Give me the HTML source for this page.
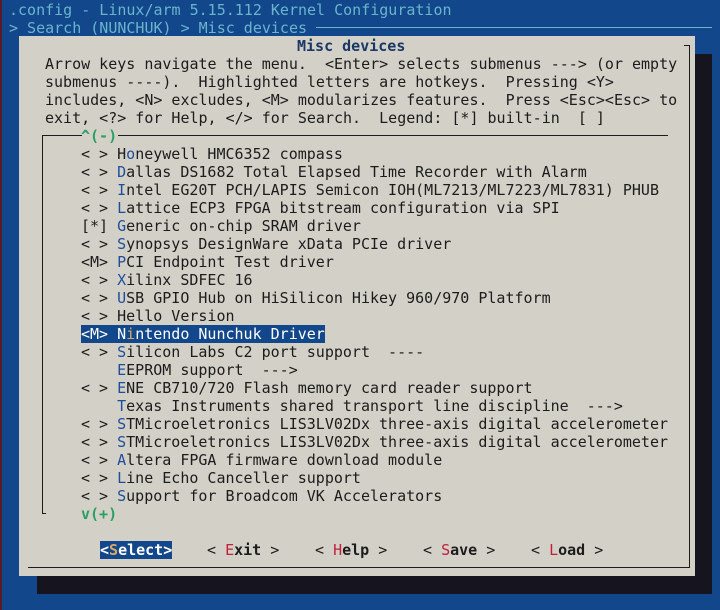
<!DOCTYPE html>
<html><head><meta charset="utf-8"><style>
html,body{margin:0;padding:0}
body{width:720px;height:610px;background:#12488b;position:relative;overflow:hidden;font-family:"DejaVu Sans Mono","Liberation Mono",monospace;font-size:15px}
.r{position:absolute;white-space:pre;line-height:18px;height:18px;color:#1c1c1c;margin-top:1px}
.c{color:#6ab4cc}
.b{color:#1e4e9a}
.g{color:#2aa063;font-weight:bold}
.k{color:#c0203a}
</style></head><body>
<div style="position:absolute;left:0;top:0;width:2px;height:610px;background:#5a1a2a"></div>
<div class="r c" style="left:9px;top:0">.config - Linux/arm 5.15.112 Kernel Configuration</div>
<div class="r c" style="left:9px;top:18px">&gt; Search (NUNCHUK) &gt; Misc devices</div>
<div style="position:absolute;left:316px;top:27px;width:396px;height:1px;background:#6ab4cc"></div>
<div style="position:absolute;left:37px;top:54px;width:675px;height:540px;background:#16141e"></div>
<div style="position:absolute;left:19px;top:36px;width:676px;height:540px;background:#d3d0c8"></div>
<div style="position:absolute;left:689px;top:45px;width:1px;height:522px;background:#1c1c1c"></div>
<div style="position:absolute;left:28px;top:567px;width:662px;height:1px;background:#1c1c1c"></div>
<div style="position:absolute;left:684px;top:45px;width:6px;height:1px;background:#1c1c1c"></div>
<div class="r" style="left:297px;top:36px;color:#1a3766;font-weight:bold">Misc devices</div>
<div class="r" style="left:45px;top:54px">Arrow keys navigate the menu.  &lt;Enter&gt; selects submenus ---&gt; (or empty</div>
<div class="r" style="left:45px;top:72px">submenus ----).  Highlighted letters are hotkeys.  Pressing &lt;Y&gt;</div>
<div class="r" style="left:45px;top:90px">includes, &lt;N&gt; excludes, &lt;M&gt; modularizes features.  Press &lt;Esc&gt;&lt;Esc&gt; to</div>
<div class="r" style="left:45px;top:108px">exit, &lt;?&gt; for Help, &lt;/&gt; for Search.  Legend: [*] built-in  [ ]</div>
<div style="position:absolute;left:42px;top:135px;width:40px;height:1px;background:#1c1c1c"></div>
<div style="position:absolute;left:118px;top:135px;width:550px;height:1px;background:#1c1c1c"></div>
<div style="position:absolute;left:42px;top:135px;width:1px;height:379px;background:#1c1c1c"></div>
<div style="position:absolute;left:42px;top:513px;width:4px;height:1px;background:#1c1c1c"></div>
<div class="r g" style="left:81px;top:126px">^(-)</div>
<div class="r" style="left:81px;top:144px">&lt; &gt; H<span class="b">o</span>neywell HMC6352 compass</div>
<div class="r" style="left:81px;top:162px">&lt; &gt; <span class="b">D</span>allas DS1682 Total Elapsed Time Recorder with Alarm</div>
<div class="r" style="left:81px;top:180px">&lt; &gt; <span class="b">I</span>ntel EG20T PCH/LAPIS Semicon IOH(ML7213/ML7223/ML7831) PHUB</div>
<div class="r" style="left:81px;top:198px">&lt; &gt; <span class="b">L</span>attice ECP3 FPGA bitstream configuration via SPI</div>
<div class="r" style="left:81px;top:216px">[*] <span class="b">G</span>eneric on-chip SRAM driver</div>
<div class="r" style="left:81px;top:234px">&lt; &gt; <span class="b">S</span>ynopsys DesignWare xData PCIe driver</div>
<div class="r" style="left:81px;top:252px">&lt;M&gt; <span class="b">P</span>CI Endpoint Test driver</div>
<div class="r" style="left:81px;top:270px">&lt; &gt; <span class="b">X</span>ilinx SDFEC 16</div>
<div class="r" style="left:81px;top:288px">&lt; &gt; <span class="b">U</span>SB GPIO Hub on HiSilicon Hikey 960/970 Platform</div>
<div class="r" style="left:81px;top:306px">&lt; &gt; Hello Version</div>
<div class="r" style="left:81px;top:324px;background:#12488b;color:#fff;width:244px">&lt;M&gt; N<span style="color:#d8a86a">i</span>ntendo Nunchuk Driver</div>
<div class="r" style="left:81px;top:342px">&lt; &gt; <span class="b">S</span>ilicon Labs C2 port support  ----</div>
<div class="r" style="left:81px;top:360px">    <span class="b">E</span>EPROM support  ---&gt;</div>
<div class="r" style="left:81px;top:378px">&lt; &gt; <span class="b">E</span>NE CB710/720 Flash memory card reader support</div>
<div class="r" style="left:81px;top:396px">    <span class="b">T</span>exas Instruments shared transport line discipline  ---&gt;</div>
<div class="r" style="left:81px;top:414px">&lt; &gt; <span class="b">S</span>TMicroeletronics LIS3LV02Dx three-axis digital accelerometer</div>
<div class="r" style="left:81px;top:432px">&lt; &gt; <span class="b">S</span>TMicroeletronics LIS3LV02Dx three-axis digital accelerometer</div>
<div class="r" style="left:81px;top:450px">&lt; &gt; <span class="b">A</span>ltera FPGA firmware download module</div>
<div class="r" style="left:81px;top:468px">&lt; &gt; <span class="b">L</span>ine Echo Canceller support</div>
<div class="r" style="left:81px;top:486px">&lt; &gt; <span class="b">S</span>upport for Broadcom VK Accelerators</div>
<div class="r g" style="left:81px;top:504px">v(+)</div>
<div class="r" style="left:100px;top:540px;background:#12488b;color:#fff;font-weight:bold;width:72px">&lt;<span style="color:#d8a86a">S</span>elect&gt;</div>
<div class="r" style="left:207px;top:540px">&lt; <span class="k">E</span><b>xit</b> &gt;</div>
<div class="r" style="left:315px;top:540px">&lt; <span class="k">H</span><b>elp</b> &gt;</div>
<div class="r" style="left:423px;top:540px">&lt; <span class="k">S</span><b>ave</b> &gt;</div>
<div class="r" style="left:531px;top:540px">&lt; <span class="k">L</span><b>oad</b> &gt;</div>
</body></html>
